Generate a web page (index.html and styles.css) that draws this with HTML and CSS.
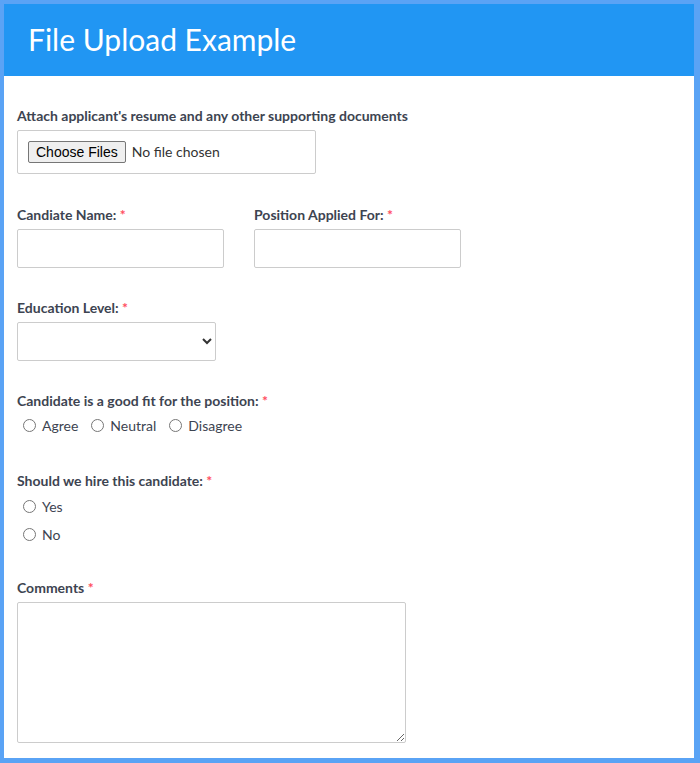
FILE: index.html
```html
<!DOCTYPE html>
<html lang="en">
<head>
<meta charset="utf-8">
<title>File Upload Example</title>
<link rel="stylesheet" href="styles.css">
</head>
<body>
<div class="frame">
  <header class="header">
    <h1 class="title">File Upload Example</h1>
  </header>
  <form class="form">
    <div class="field field-file">
      <label class="label" for="files">Attach applicant's resume and any other supporting documents</label>
      <div class="file-box"><input class="file" id="files" type="file" multiple></div>
    </div>

    <div class="row">
      <div class="field">
        <label class="label" for="name">Candiate Name: <span class="req">*</span></label>
        <input class="text" id="name" type="text">
      </div>
      <div class="field">
        <label class="label" for="pos">Position Applied For: <span class="req">*</span></label>
        <input class="text" id="pos" type="text">
      </div>
    </div>

    <div class="field">
      <label class="label" for="edu">Education Level: <span class="req">*</span></label>
      <select class="select" id="edu"><option></option></select>
    </div>

    <div class="field field-fit">
      <span class="label">Candidate is a good fit for the position: <span class="req">*</span></span>
      <div class="radios inline">
        <label class="opt"><input type="radio" name="fit"> Agree</label>
        <label class="opt"><input type="radio" name="fit"> Neutral</label>
        <label class="opt"><input type="radio" name="fit"> Disagree</label>
      </div>
    </div>

    <div class="field field-hire">
      <span class="label">Should we hire this candidate: <span class="req">*</span></span>
      <div class="radios stacked">
        <label class="opt"><input type="radio" name="hire"> Yes</label>
        <label class="opt"><input type="radio" name="hire"> No</label>
      </div>
    </div>

    <div class="field">
      <label class="label" for="comments">Comments <span class="req">*</span></label>
      <textarea class="area" id="comments"></textarea>
    </div>
  </form>
</div>
</body>
</html>
```
FILE: styles.css
```css
html, body {
  margin: 0;
  padding: 0;
  background: #ffffff;
}
body {
  font-family: Lato, "Open Sans", sans-serif;
  color: #3d4451;
}
.frame {
  box-sizing: border-box;
  width: 700px;
  height: 763px;
  border-style: solid;
  border-color: #5aa3f5;
  border-width: 4px 6px 5px 4px;
  overflow: hidden;
  background: #fff;
}
.header {
  background: #2196f3;
  height: 72px;
  display: flex;
  align-items: center;
  padding-left: 24px;
}
.title {
  margin: 0;
  color: #ffffff;
  font-weight: 400;
  font-size: 30px;
  line-height: 1;
  padding-bottom: 2px;
}
.form {
  padding: 31px 13px 0 13px;
  display: flex;
  flex-direction: column;
  gap: 31px;
}
.field {
  display: flex;
  flex-direction: column;
  align-items: flex-start;
}
.field-file {
  margin-bottom: 1px;
}
.field-fit {
  margin-bottom: 7px;
}
.field-hire {
  margin-bottom: 5px;
}
.row {
  display: flex;
  gap: 30px;
}
.label {
  display: block;
  font-weight: 700;
  font-size: 14px;
  line-height: 17px;
  margin-bottom: 6px;
  color: #3d4451;
}
.req {
  color: #ff4d5e;
}
.file-box {
  box-sizing: border-box;
  width: 299px;
  height: 44px;
  border: 1px solid #cccccc;
  border-radius: 2px;
  padding: 0 10px;
  display: flex;
  align-items: center;
}
.file {
  font-family: Lato, sans-serif;
  font-size: 14px;
  color: #333;
}
.file::file-selector-button {
  font-family: "Liberation Sans", Arial, sans-serif;
  font-size: 14px;
  height: 22px;
  padding: 0 7px;
  margin-right: 6px;
  border: 1px solid #767676;
  border-radius: 2px;
  background: #efefef;
  color: #000;
}
.text {
  box-sizing: border-box;
  width: 207px;
  height: 39px;
  border: 1px solid #cccccc;
  border-radius: 2px;
  font-family: Lato, sans-serif;
  font-size: 14px;
  padding: 0 8px;
}
.select {
  box-sizing: border-box;
  width: 199px;
  height: 39px;
  border: 1px solid #cccccc;
  border-radius: 2px;
  background: #fff;
  font-family: Lato, sans-serif;
  font-size: 14px;
  color: #333;
}
.radios {
  font-size: 14px;
  color: #3d4451;
}
.radios input {
  width: 13px;
  height: 13px;
  margin: 0 3px 0 0;
}
.opt {
  display: inline-flex;
  align-items: center;
  gap: 3px;
  line-height: 17px;
}
.inline {
  display: flex;
  gap: 13px;
  padding-left: 6px;
  margin-top: 2px;
}
.stacked {
  display: flex;
  flex-direction: column;
  gap: 11px;
  padding-left: 6px;
  margin-top: 3px;
}
.area {
  box-sizing: border-box;
  width: 389px;
  height: 141px;
  border: 1px solid #cccccc;
  border-radius: 2px;
  font-family: Lato, sans-serif;
  font-size: 14px;
}
```
